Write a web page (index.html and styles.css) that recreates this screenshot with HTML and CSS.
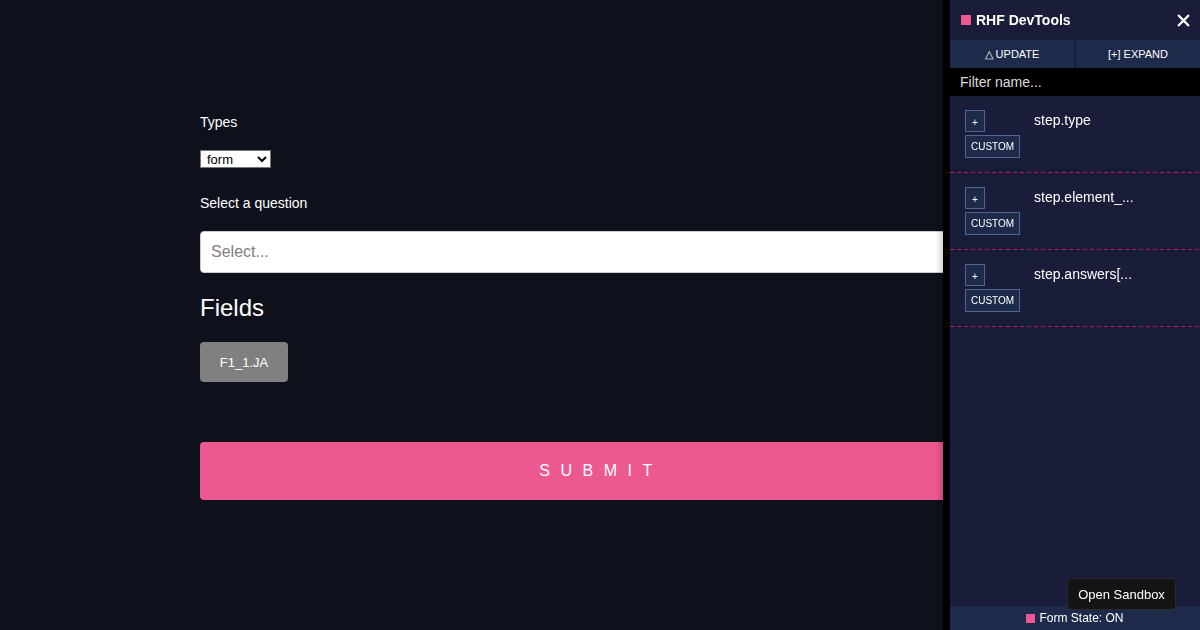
FILE: index.html
```html
<!DOCTYPE html>
<html lang="en">
<head>
    <meta charset="UTF-8">
    <meta name="viewport" content="width=device-width, initial-scale=1.0">
    <title>Form Builder</title>
    <link rel="stylesheet" href="styles.css">
</head>
<body>
    <form class="form">
        <label class="label">Types</label>
        <select class="type-select">
            <option>form</option>
            <option>question</option>
        </select>

        <label class="label">Select a question</label>
        <div class="select-control">Select...</div>

        <h2 class="fields-title">Fields</h2>
        <button type="button" class="field-chip">F1_1.JA</button>

        <button type="submit" class="submit">Submit</button>
    </form>

    <!-- DevTools panel -->
    <aside class="devtools">
        <div class="dt-head">
            <span class="dt-logo"></span>
            <span class="dt-title">RHF DevTools</span>
            <button class="dt-close" type="button">
                <svg viewBox="0 0 14 14" width="13" height="13">
                    <path d="M2 2L12 12M12 2L2 12" stroke="#fff" stroke-width="2.4" stroke-linecap="square" />
                </svg>
            </button>
        </div>
        <div class="dt-actions">
            <button type="button">&#9651; UPDATE</button>
            <button type="button">[+] EXPAND</button>
        </div>
        <input class="dt-filter" type="text" placeholder="Filter name...">

        <div class="dt-list">
            <div class="dt-row">
                <div class="dt-btns">
                    <button type="button" class="dt-mini dt-plus">+</button>
                    <button type="button" class="dt-mini">CUSTOM</button>
                </div>
                <div class="dt-name">step.type</div>
            </div>
            <div class="dt-row">
                <div class="dt-btns">
                    <button type="button" class="dt-mini dt-plus">+</button>
                    <button type="button" class="dt-mini">CUSTOM</button>
                </div>
                <div class="dt-name">step.element_...</div>
            </div>
            <div class="dt-row">
                <div class="dt-btns">
                    <button type="button" class="dt-mini dt-plus">+</button>
                    <button type="button" class="dt-mini">CUSTOM</button>
                </div>
                <div class="dt-name">step.answers[...</div>
            </div>
        </div>

        <div class="dt-footer"><span class="dt-dot"></span>Form State: ON</div>
        <div class="dt-sandbox">Open Sandbox</div>
    </aside>
</body>
</html>
```

FILE: styles.css
```css
body {
    font-family: "Liberation Sans", Arial, sans-serif;
    margin: 0;
    padding: 0;
    background-color: #0e101c;
    color: white;
    overflow: hidden;
}

.form {
    max-width: 800px;
    margin: 0 auto;
    padding-top: 108px;
}

.label {
    display: block;
    line-height: 2;
    font-size: 14px;
    margin-bottom: 14px;
    color: white;
}

.type-select {
    display: block;
    width: 71px;
    height: 18px;
    font-family: "Liberation Sans", Arial, sans-serif;
    font-size: 13px;
    margin: 0 0 21px 0;
    padding: 0 0 0 2px;
    border: 1px solid #767676;
    border-radius: 0;
    background: white;
    color: black;
}

.select-control {
    box-sizing: border-box;
    height: 42px;
    background: white;
    border: 1px solid #ccc;
    border-radius: 4px;
    padding: 0 10px;
    display: flex;
    align-items: center;
    color: #808080;
    font-size: 16px;
}

.fields-title {
    font-size: 24px;
    font-weight: normal;
    margin: 21px 0 20px 0;
    line-height: 28px;
}

.field-chip {
    display: block;
    width: 88px;
    height: 40px;
    background: #808080;
    border: none;
    border-radius: 4px;
    color: white;
    font-family: "Liberation Sans", Arial, sans-serif;
    font-size: 13px;
}

.submit {
    display: block;
    width: 100%;
    margin-top: 60px;
    padding: 20px;
    height: 58px;
    background: #ec5990;
    color: white;
    border: none;
    border-radius: 4px 0 0 4px;
    font-family: "Liberation Sans", Arial, sans-serif;
    font-size: 16px;
    letter-spacing: 10.5px;
    text-transform: uppercase;
    text-indent: 2px;
}

/* DevTools */
.devtools {
    position: fixed;
    top: 0;
    right: 0;
    width: 250px;
    height: 100%;
    background: #191d3a;
    border-left: 7px solid #000;
    box-shadow: -4px 0 4px rgba(0, 0, 0, 0.15);
    display: flex;
    flex-direction: column;
    font-family: "Liberation Sans", Arial, sans-serif;
}

.dt-head {
    height: 40px;
    display: flex;
    align-items: center;
    padding: 0 10px 0 11px;
}

.dt-logo {
    width: 10px;
    height: 10px;
    background: #ec5990;
    margin-right: 5px;
}

.dt-title {
    font-weight: bold;
    font-size: 14px;
    flex: 1;
}

.dt-close {
    background: none;
    border: none;
    padding: 0;
    display: flex;
}

.dt-actions {
    display: grid;
    grid-template-columns: 1fr 1fr;
    gap: 2px;
    height: 28px;
    background: #191d3a;
}

.dt-actions button {
    background: #1e2a4a;
    border: none;
    color: white;
    font-family: "Liberation Sans", Arial, sans-serif;
    font-size: 11px;
}

.dt-filter {
    box-sizing: border-box;
    height: 28px;
    width: 100%;
    background: #000;
    border: none;
    outline: none;
    padding: 0 10px 1px 10px;
    color: white;
    font-family: "Liberation Sans", Arial, sans-serif;
    font-size: 14px;
}

.dt-filter::placeholder {
    color: #ddd;
}

.dt-list {
    flex: 1;
}

.dt-row {
    box-sizing: border-box;
    height: 77px;
    display: grid;
    grid-template-columns: 69px 1fr;
    align-items: start;
    padding: 14px 10px 0 15px;
    background: repeating-linear-gradient(to right, #bf1650 0 4px, transparent 4px 7px) left bottom / 100% 1px no-repeat;
}

.dt-btns {
    display: flex;
    flex-direction: column;
    align-items: flex-start;
    gap: 3px;
}

.dt-mini {
    background: #1e2a4a;
    border: 1px solid #516391;
    color: white;
    font-family: "Liberation Sans", Arial, sans-serif;
    font-size: 10px;
    height: 23px;
    padding: 0 5px;
}

.dt-plus {
    width: 20px;
    height: 22px;
    padding: 2px 0 0 0;
    font-size: 10px;
}

.dt-name {
    font-size: 14px;
    line-height: 16px;
    padding-top: 2px;
}

.dt-footer {
    height: 24px;
    background: #1e2a4a;
    display: flex;
    align-items: center;
    justify-content: center;
    font-size: 12px;
}

.dt-dot {
    width: 9px;
    height: 9px;
    background: #ec5990;
    margin-right: 4px;
}

.dt-sandbox {
    position: absolute;
    right: 24px;
    bottom: 20px;
    box-sizing: border-box;
    width: 109px;
    height: 32px;
    background: #141414;
    border: 1px solid #2a2a2a;
    border-radius: 4px;
    display: flex;
    align-items: center;
    justify-content: center;
    font-size: 13px;
}
```
